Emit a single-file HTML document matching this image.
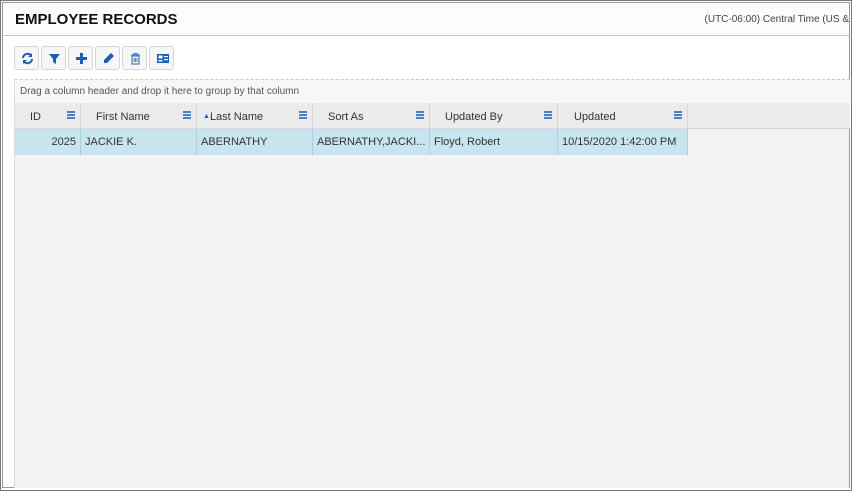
<!DOCTYPE html>
<html><head><style>
*{box-sizing:border-box;margin:0;padding:0}
body{width:852px;height:491px;overflow:hidden;background:#fff;font-family:"Liberation Sans",Arial,sans-serif;position:relative}
.frame{position:absolute;left:0;top:0;width:852px;height:491px;border:1px solid #777;}
.frame2{position:absolute;left:2px;top:2px;width:848px;height:486px;border:1px solid #999;}
.hdr{position:absolute;left:3px;top:3px;width:846px;height:33px;background:#fcfcfc;border-bottom:1px solid #b8c8dc}
.title{position:absolute;left:12px;top:8px;font-size:15px;font-weight:bold;color:#111}
.tz{position:absolute;right:0;top:11px;font-size:10px;color:#444;white-space:nowrap}
.btn{position:absolute;top:46px;width:25px;height:24px;border:1px solid #d5d5d5;border-radius:3px;background:#f6f6f6}
.btn svg{position:absolute;left:6px;top:5px}
.grid{position:absolute;left:14px;top:79px;width:835px;height:409px;background:#f3f3f3;border-left:1px solid #ddd}
.grp{position:absolute;left:0;top:0;width:835px;height:24px;border-top:1px dashed #ccc;background:#f7f7f7;font-size:10px;color:#555;padding:6px 0 0 5px}
.th{position:absolute;top:24px;height:26px;background:#ebebeb;border-bottom:1px solid #d6d6d6;border-right:1px solid #d6d6d6;font-size:11px;color:#333;padding-top:8px}
.m{position:absolute;right:5px;top:8px;width:8px;height:8px;border-top:2px solid #4a7fc0;border-bottom:2px solid #4a7fc0}
.m:after{content:"";position:absolute;left:0;right:0;top:1px;border-top:2px solid #4a7fc0}
.td{position:absolute;top:50px;height:26px;background:#c7e4ef;border-right:1px solid #a9cfe0;font-size:11px;color:#333;padding:7px 0 0 4px;white-space:nowrap}
</style></head><body>
<div class="frame"></div><div class="frame2"></div>
<div class="hdr"><div class="title">EMPLOYEE RECORDS</div><div class="tz">(UTC-06:00) Central Time (US &amp;</div></div>
<div class="btn" style="left:14px"><svg width="13" height="13" viewBox="0 0 13 13"><path d="M2 6a4.5 4.5 0 0 1 8-2.5M11 7a4.5 4.5 0 0 1-8 2.5" stroke="#1a5fb4" stroke-width="2" fill="none"/><path d="M11 1v4H7zM2 12V8h4z" fill="#1a5fb4"/></svg></div>
<div class="btn" style="left:41px"><svg width="13" height="13" viewBox="0 0 13 13"><path d="M1 2h11L8 7v5L5 10V7z" fill="#1a5fb4"/></svg></div>
<div class="btn" style="left:68px"><svg width="13" height="13" viewBox="0 0 13 13"><path d="M5 1h3v4h4v3H8v4H5V8H1V5h4z" fill="#1a5fb4"/></svg></div>
<div class="btn" style="left:95px"><svg width="13" height="13" viewBox="0 0 13 13"><path d="M9 1l3 3-7 7H2V8z" fill="#1a5fb4"/></svg></div>
<div class="btn" style="left:122px"><svg width="13" height="13" viewBox="0 0 13 13"><path d="M2 3h9M5 3V1.5h3V3M3 4h7v8H3z" stroke="#4a7fc0" stroke-width="1.2" fill="none"/><path d="M5 6v4M6.5 6v4M8 6v4" stroke="#4a7fc0"/></svg></div>
<div class="btn" style="left:149px"><svg width="14" height="13" viewBox="0 0 14 13"><rect x="1" y="2" width="12" height="9" fill="#1a5fb4"/><rect x="2.5" y="3.5" width="4" height="3" fill="#fff"/><rect x="8" y="4" width="4" height="1.2" fill="#fff"/><rect x="8" y="7" width="4" height="1.2" fill="#fff"/><rect x="2.5" y="8" width="4" height="1.5" fill="#fff"/></svg></div>
<div class="grid">
<div class="grp">Drag a column header and drop it here to group by that column</div>
<div class="th" style="left:0;width:66px;padding-left:15px">ID<span class="m"></span></div>
<div class="th" style="left:66px;width:116px;padding-left:15px">First Name<span class="m"></span></div>
<div class="th" style="left:182px;width:116px;padding-left:6px"><span style="color:#1a5fb4;font-size:7px;vertical-align:2px">▲</span>Last Name<span class="m"></span></div>
<div class="th" style="left:298px;width:117px;padding-left:15px">Sort As<span class="m"></span></div>
<div class="th" style="left:415px;width:128px;padding-left:15px">Updated By<span class="m"></span></div>
<div class="th" style="left:543px;width:130px;padding-left:16px">Updated<span class="m"></span></div>
<div class="th" style="left:673px;width:162px;border-right:none"></div>
<div class="td" style="left:0;width:66px;text-align:right;padding-right:4px">2025</div>
<div class="td" style="left:66px;width:116px">JACKIE K.</div>
<div class="td" style="left:182px;width:116px">ABERNATHY</div>
<div class="td" style="left:298px;width:117px">ABERNATHY,JACKI...</div>
<div class="td" style="left:415px;width:128px">Floyd, Robert</div>
<div class="td" style="left:543px;width:130px">10/15/2020 1:42:00 PM</div>
</div>
</body></html>
